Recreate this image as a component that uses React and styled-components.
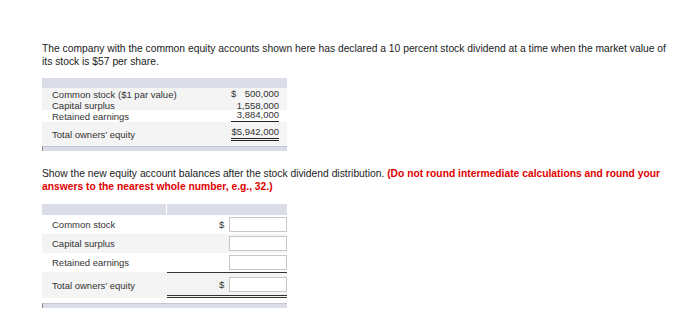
import React from "react";
import styled, { createGlobalStyle } from "styled-components";

const Global = createGlobalStyle`
  html, body { margin: 0; padding: 0; background: #fff; }
  body { font-family: "Liberation Sans", Arial, sans-serif; color: #222; }
`;

const Page = styled.div`
  padding: 43px 0 0 42px;
  width: 640px;
`;

const Para = styled.p`
  margin: ${(p) => p.$mt || 0}px 0 0 0;
  width: 630px;
  font-size: 10.3px;
  line-height: 12.5px;
  color: #222;
`;

const Red = styled.span`
  color: #e00000;
  font-weight: bold;
`;

const Table = styled.div`
  width: 245px;
  margin-top: ${(p) => p.$mt}px;
  font-size: 9.5px;
  color: #333;
`;

const HeadBand = styled.div`
  display: grid;
  grid-template-columns: ${(p) => p.$cols};
  height: ${(p) => p.$h}px;
  gap: 1px;
  & > div { background: #dadde8; }
`;

const FootBand = styled.div`
  height: 4px;
  margin-top: ${(p) => p.$mt}px;
  background: #dadde8;
  border-top: 1px solid #c3c7d3;
  border-left: 1px solid #8a8a8a;
`;

const Row = styled.div`
  display: grid;
  grid-template-columns: ${(p) => p.$cols};
  height: ${(p) => p.$h}px;
  align-items: center;
  background: ${(p) => (p.$shade ? "#f4f4f4" : "#fff")};
`;

const Label = styled.div`
  padding-left: 10px;
  white-space: nowrap;
`;

const ValueCell = styled.div`
  display: flex;
  justify-content: flex-end;
  padding-right: 8px;
`;

const Amount = styled.div`
  width: 48px;
  display: flex;
  justify-content: space-between;
  line-height: 10px;
  border-bottom: ${(p) =>
    p.$line === "double" ? "3px double #222" : p.$line === "single" ? "1px solid #222" : "none"};
  padding-bottom: ${(p) => (p.$line ? 1 : 0)}px;
`;

const EntryCell = styled.div`
  height: 100%;
  display: flex;
  align-items: center;
  justify-content: flex-end;
  gap: 4px;
  box-sizing: border-box;
  border-top: ${(p) => (p.$top ? "1px solid #333" : "none")};
  border-bottom: ${(p) => (p.$double ? "3px double #333" : "none")};
`;

const Dollar = styled.span`
  font-size: 9.5px;
  color: #333;
  width: 6px;
`;

const Input = styled.div`
  width: 56px;
  height: 13px;
  border: 1px solid #c6c6c6;
  background: #fff;
`;

const rows1 = [
  { label: "Common stock ($1 par value)", cur: "$", amt: "500,000", shade: true, h: 12 },
  { label: "Capital surplus", cur: "", amt: "1,558,000", shade: true, h: 10 },
  { label: "Retained earnings", cur: "", amt: "3,884,000", shade: false, h: 12, line: "single" },
  { label: "Total owners\u2019 equity", cur: "", amt: "$5,942,000", shade: true, h: 24, line: "double" },
];

const rows2 = [
  { label: "Common stock", dollar: true, shade: false },
  { label: "Capital surplus", dollar: false, shade: true },
  { label: "Retained earnings", dollar: false, shade: false },
  { label: "Total owners\u2019 equity", dollar: true, shade: true, total: true },
];

export default function App() {
  return (
    <>
      <Global />
      <Page>
        <Para>
          The company with the common equity accounts shown here has declared a 10 percent stock dividend at a time
          when the market value of its stock is $57 per share.
        </Para>

        <Table $mt={10}>
          <HeadBand $cols="1fr" $h={10}>
            <div />
          </HeadBand>
          {rows1.map((r) => (
            <Row key={r.label} $cols="1fr auto" $h={r.h} $shade={r.shade}>
              <Label>{r.label}</Label>
              <ValueCell>
                <Amount $line={r.line}>
                  <span>{r.cur}</span>
                  <span>{r.amt}</span>
                </Amount>
              </ValueCell>
            </Row>
          ))}
          <FootBand $mt={0} />
        </Table>

        <Para $mt={17}>
          Show the new equity account balances after the stock dividend distribution.{" "}
          <Red>
            (Do not round intermediate calculations and round your answers to the nearest whole number, e.g., 32.)
          </Red>
        </Para>

        <Table $mt={11}>
          <HeadBand $cols="124px 1fr" $h={11}>
            <div />
            <div />
          </HeadBand>
          {rows2.map((r) => (
            <Row key={r.label} $cols="125px 1fr" $h={r.total ? 26 : 19} $shade={r.shade}>
              <Label>{r.label}</Label>
              <EntryCell $top={r.total} $double={r.total}>
                {r.dollar ? <Dollar>$</Dollar> : null}
                <Input />
              </EntryCell>
            </Row>
          ))}
          <FootBand $mt={5} />
        </Table>
      </Page>
    </>
  );
}
